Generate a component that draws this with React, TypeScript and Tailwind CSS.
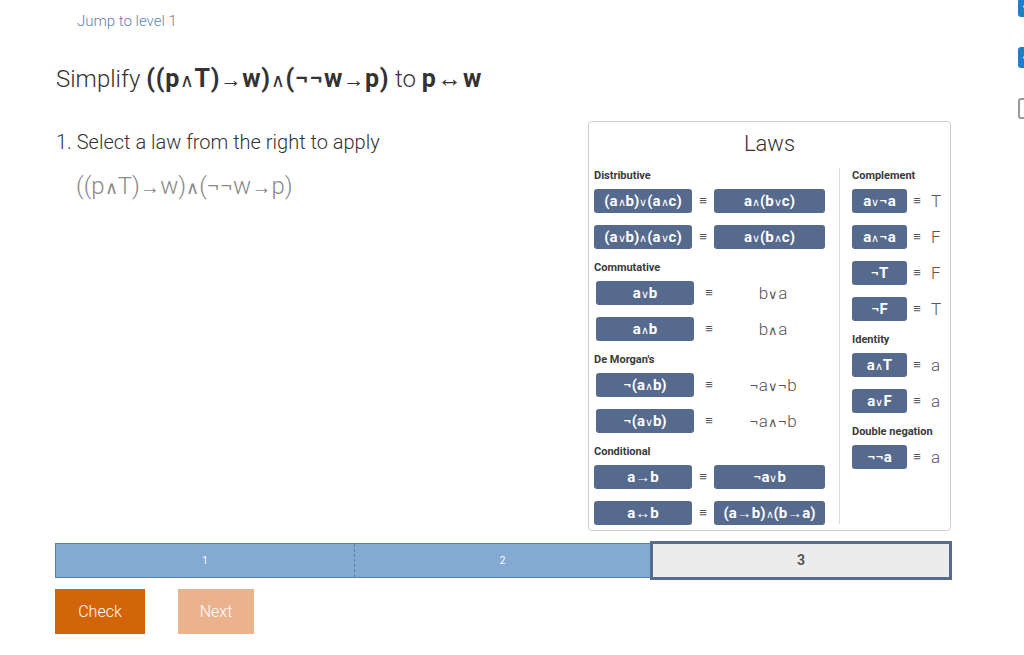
import React from 'react';

type PairRow = { left: string; right: string; rightIsButton: boolean };
type Section = { title: string; wide: boolean; rows: PairRow[] };

const leftSections: Section[] = [
  {
    title: 'Distributive',
    wide: true,
    rows: [
      { left: '(a∧b)∨(a∧c)', right: 'a∧(b∨c)', rightIsButton: true },
      { left: '(a∨b)∧(a∨c)', right: 'a∨(b∧c)', rightIsButton: true },
    ],
  },
  {
    title: 'Commutative',
    wide: false,
    rows: [
      { left: 'a∨b', right: 'b∨a', rightIsButton: false },
      { left: 'a∧b', right: 'b∧a', rightIsButton: false },
    ],
  },
  {
    title: "De Morgan's",
    wide: false,
    rows: [
      { left: '¬(a∧b)', right: '¬a∨¬b', rightIsButton: false },
      { left: '¬(a∨b)', right: '¬a∧¬b', rightIsButton: false },
    ],
  },
  {
    title: 'Conditional',
    wide: true,
    rows: [
      { left: 'a→b', right: '¬a∨b', rightIsButton: true },
      { left: 'a↔b', right: '(a→b)∧(b→a)', rightIsButton: true },
    ],
  },
];

const rightSections = [
  {
    title: 'Complement',
    rows: [
      { left: 'a∨¬a', right: 'T' },
      { left: 'a∧¬a', right: 'F' },
      { left: '¬T', right: 'F' },
      { left: '¬F', right: 'T' },
    ],
  },
  {
    title: 'Identity',
    rows: [
      { left: 'a∧T', right: 'a' },
      { left: 'a∨F', right: 'a' },
    ],
  },
  {
    title: 'Double negation',
    rows: [{ left: '¬¬a', right: 'a' }],
  },
];

// thin, slightly smaller logic symbols like the original page
const Expr = ({ text, smallArrows = false }: { text: string; smallArrows?: boolean }) => (
  <>
    {Array.from(text).map((ch, i) => {
      if (ch === '∧' || ch === '∨')
        return (
          <span key={i} className="font-normal text-[0.75em] leading-none">
            {ch}
          </span>
        );
      if (smallArrows && ch === '→')
        return (
          <span key={i} className="font-normal text-[0.85em] leading-none">
            {ch}
          </span>
        );
      return <React.Fragment key={i}>{ch}</React.Fragment>;
    })}
  </>
);

const LawButton = ({ label, className = '' }: { label: string; className?: string }) => (
  <button className={`h-[24px] overflow-hidden rounded-[3px] bg-[#566a8e] text-white text-[15px] font-bold leading-[24px] text-center whitespace-nowrap ${className}`}>
    <Expr text={label} />
  </button>
);

const Equiv = () => <span className="text-center text-[13px] text-[#555] leading-[24px]">≡</span>;

const SectionTitle = ({ children }: { children: React.ReactNode }) => (
  <div className="h-[14px] text-[11px] leading-[14px] font-bold text-[#3a3a3a]">{children}</div>
);

const CheckBox = ({ checked }: { checked: boolean }) =>
  checked ? (
    <div className="w-[21px] h-[21px] rounded-[3px] bg-[#1c7fd0] flex items-center justify-center">
      <svg width="13" height="13" viewBox="0 0 24 24" fill="none" stroke="white" strokeWidth="4" strokeLinecap="round" strokeLinejoin="round">
        <path d="M4 12l5 5L20 6" />
      </svg>
    </div>
  ) : (
    <div className="w-[21px] h-[21px] rounded-[3px] border-2 border-[#999] bg-white" />
  );

export default function App() {
  return (
    <div className="relative w-[1024px] h-[655px] bg-white overflow-hidden" style={{ fontFamily: 'Roboto, "Liberation Sans", sans-serif' }}>
      {/* side checkboxes cut off at the window edge */}
      <div className="absolute left-[1018px] top-[-4px] flex flex-col gap-[30px]">
        <CheckBox checked />
        <CheckBox checked />
        <CheckBox checked={false} />
      </div>

      <div className="pl-[55px] pt-[12px]">
        <a className="block pl-[22px] text-[15px] leading-[18px] text-[#5b84b1] font-light">Jump to level 1</a>

        <h1 className="mt-[33px] h-[32px] pl-[1px] text-[24px] leading-[32px] text-[#333] font-light whitespace-nowrap">
          Simplify{' '}
          <span className="font-bold text-[25px] tracking-[0.7px] leading-none">
            <Expr text="((p∧T)→w)∧(¬¬w→p)" smallArrows />
          </span>{' '}
          to <span className="font-bold text-[25px] tracking-[1px] leading-none">p↔w</span>
        </h1>

        <div className="mt-[26px] flex">
          {/* instructions */}
          <div className="w-[533px] pl-[1px] pt-[7px]">
            <p className="text-[20px] leading-[28px] text-[#333] font-light">1. Select a law from the right to apply</p>
            <p className="mt-[14px] h-[32px] pl-[20px] text-[24px] leading-[32px] text-[#8a8a8a] font-light">
              <Expr text="((p∧T)→w)∧(¬¬w→p)" smallArrows />
            </p>
          </div>

          {/* laws panel */}
          <div className="w-[363px] h-[410px] border border-[#cfcfcf] rounded-[4px]">
            <div className="pt-[8px] text-center text-[22px] leading-[28px] text-[#333] font-light">Laws</div>
            <div className="mt-[10px] flex pl-[5px]">
              <div className="w-[245px] flex flex-col gap-[12px] pt-[1px]">
                {leftSections.map((section) => (
                  <div key={section.title} className="flex flex-col gap-[6px]">
                    <SectionTitle>{section.title}</SectionTitle>
                    <div className="flex flex-col gap-[12px]">
                      {section.rows.map((row) =>
                        section.wide ? (
                          <div key={row.left} className="h-[24px] grid grid-cols-[98px_22px_111px] items-center">
                            <LawButton label={row.left} />
                            <Equiv />
                            <LawButton label={row.right} />
                          </div>
                        ) : (
                          <div key={row.left} className="h-[24px] ml-[2px] grid grid-cols-[98px_30px_98px] items-center">
                            <LawButton label={row.left} />
                            <Equiv />
                            <span className="h-[24px] text-center text-[17px] leading-[24px] text-[#555] font-light">
                              <Expr text={row.right} />
                            </span>
                          </div>
                        )
                      )}
                    </div>
                  </div>
                ))}
              </div>

              <div className="border-l border-[#dcdcdc] pl-[12px] h-[356px] flex flex-col gap-[12px] pt-[1px]">
                {rightSections.map((section) => (
                  <div key={section.title} className="flex flex-col gap-[6px]">
                    <SectionTitle>{section.title}</SectionTitle>
                    <div className="flex flex-col gap-[12px]">
                      {section.rows.map((row) => (
                        <div key={row.left} className="h-[24px] grid grid-cols-[55px_20px_20px] items-center">
                          <LawButton label={row.left} />
                          <Equiv />
                          <span className="pl-[4px] text-[17px] leading-[24px] text-[#555] font-light">{row.right}</span>
                        </div>
                      ))}
                    </div>
                  </div>
                ))}
              </div>
            </div>
          </div>
        </div>

        {/* progress bar */}
        <div className="mt-[12px] w-[897px] grid grid-cols-[299px_296px_302px] grid-rows-[35px]">
          <div className="bg-[#84aad2] border-y border-l border-[#5a7fa8] flex items-center justify-center text-[10px] text-white">1</div>
          <div className="bg-[#84aad2] border-y border-[#5a7fa8]">
            <div className="h-full border-l border-dashed border-[#5a7fa8] flex items-center justify-center text-[10px] text-white">2</div>
          </div>
          <div className="-my-[2px] bg-[#ececec] border-[3px] border-[#556b8f] flex items-center justify-center text-[14px] font-bold text-[#555]">3</div>
        </div>

        <div className="mt-[11px] flex gap-[33px]">
          <button className="w-[90px] h-[45px] bg-[#d2640a] text-white text-[16px] font-light">Check</button>
          <button className="w-[76px] h-[45px] bg-[#ebb28e] text-white text-[16px] font-light">Next</button>
        </div>
      </div>
    </div>
  );
}
